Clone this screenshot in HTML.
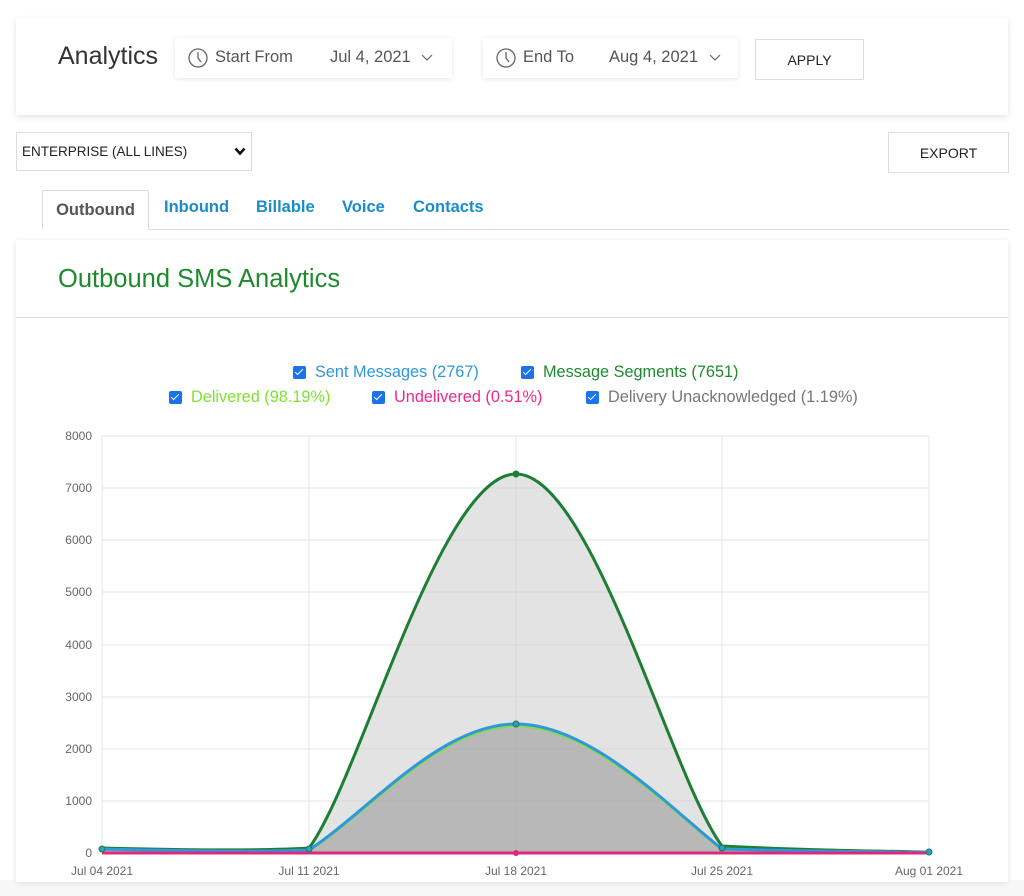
<!DOCTYPE html>
<html><head><meta charset="utf-8"><style>
*{box-sizing:border-box;margin:0;padding:0}
body{width:1024px;height:896px;background:#fff;font-family:"Liberation Sans",sans-serif;position:relative;overflow:hidden;color:#333}
.abs{position:absolute}
.top{left:16px;top:18px;width:992px;height:97px;background:#fff;box-shadow:0 2px 6px rgba(0,0,0,.12)}
.pick{background:#fff;box-shadow:0 1px 5px rgba(0,0,0,.1);height:40px;font-size:16.5px;color:#555}
.pick span,.pick svg{position:absolute}
.btn{border:1px solid #ddd;background:#fff;font-size:14px;color:#222;display:flex;align-items:center;justify-content:center}
.tab{font-size:16.5px;font-weight:bold;color:#1a8ccc;top:198px}
.card{left:16px;top:240px;width:992px;height:642px;background:#fff;box-shadow:0 1px 6px rgba(0,0,0,.1)}
.lg{font-size:16.3px;display:flex;align-items:center}
.cb{width:13px;height:13px;background:#1a73e8;border-radius:2px;margin-right:9px;display:inline-block;position:relative}
.cb:after{content:"";position:absolute;left:4px;top:1px;width:3px;height:7px;border:solid #fff;border-width:0 1.7px 1.7px 0;transform:rotate(45deg)}
</style></head><body>
<div style="position:absolute;left:0;top:880px;width:1024px;height:16px;background:#f7f7f7"></div>
<div class="abs top"></div>
<div class="abs" style="left:58px;top:42px;font-size:25px;color:#333">Analytics</div>
<div class="abs pick" style="left:175px;top:38px;width:277px">
<svg width="22" height="22" style="left:12px;top:9px" viewBox="0 0 22 22"><circle cx="11" cy="11" r="9" fill="none" stroke="#666" stroke-width="1.3"/><path d="M11 5v6l3 4" fill="none" stroke="#666" stroke-width="1.3"/></svg>
<span style="left:40px;top:10px">Start From</span><span style="left:155px;top:10px">Jul 4, 2021</span>
<svg width="12" height="8" style="left:246px;top:16px" viewBox="0 0 12 8"><path d="M1 1l5 5 5-5" fill="none" stroke="#666" stroke-width="1.2"/></svg></div>
<div class="abs pick" style="left:483px;top:38px;width:255px">
<svg width="22" height="22" style="left:12px;top:9px" viewBox="0 0 22 22"><circle cx="11" cy="11" r="9" fill="none" stroke="#666" stroke-width="1.3"/><path d="M11 5v6l3 4" fill="none" stroke="#666" stroke-width="1.3"/></svg>
<span style="left:40px;top:10px">End To</span><span style="left:126px;top:10px">Aug 4, 2021</span>
<svg width="12" height="8" style="left:226px;top:16px" viewBox="0 0 12 8"><path d="M1 1l5 5 5-5" fill="none" stroke="#666" stroke-width="1.2"/></svg></div>
<div class="abs btn" style="left:755px;top:39px;width:109px;height:41px">APPLY</div>
<div class="abs btn" style="left:16px;top:132px;width:236px;height:39px;justify-content:space-between;padding:0 5px 0 5px;font-size:13.5px"><span>ENTERPRISE (ALL LINES)</span><svg width="12" height="9" viewBox="0 0 12 9"><path d="M1.5 1.5l4.5 5 4.5-5" fill="none" stroke="#111" stroke-width="2.6"/></svg></div>
<div class="abs btn" style="left:888px;top:132px;width:121px;height:41px">EXPORT</div>
<div class="abs" style="left:42px;top:229px;width:967px;height:1px;background:#ddd"></div>
<div class="abs" style="left:42px;top:190px;width:107px;height:40px;border:1px solid #ddd;border-bottom:1px solid #fff;background:#fff;font-size:16.5px;font-weight:bold;color:#555;text-align:center;line-height:38px">Outbound</div>
<div class="abs tab" style="left:164px">Inbound</div>
<div class="abs tab" style="left:256px">Billable</div>
<div class="abs tab" style="left:342px">Voice</div>
<div class="abs tab" style="left:413px">Contacts</div>
<div class="abs card"></div>
<div class="abs" style="left:58px;top:265px;font-size:25.5px;color:#1e8a2e">Outbound SMS Analytics</div>
<div class="abs" style="left:16px;top:317px;width:992px;height:1px;background:#ddd"></div>
<div class="abs lg" style="left:293px;top:363px;color:#2f97e0"><span class="cb"></span>Sent Messages (2767)</div>
<div class="abs lg" style="left:521px;top:363px;color:#1e8a2e"><span class="cb"></span>Message Segments (7651)</div>
<div class="abs lg" style="left:169px;top:388px;color:#7ee32f"><span class="cb"></span>Delivered (98.19%)</div>
<div class="abs lg" style="left:372px;top:388px;color:#f0288a"><span class="cb"></span>Undelivered (0.51%)</div>
<div class="abs lg" style="left:586px;top:388px;color:#777"><span class="cb"></span>Delivery Unacknowledged (1.19%)</div>
<svg class="abs" style="left:0;top:0" width="1024" height="896" font-family="Liberation Sans, sans-serif" font-size="12" fill="#666">
<g stroke="#e6e6e6" stroke-width="1">
<line x1="102" y1="436" x2="929" y2="436"/><line x1="102" y1="488" x2="929" y2="488"/><line x1="102" y1="540" x2="929" y2="540"/><line x1="102" y1="592" x2="929" y2="592"/><line x1="102" y1="645" x2="929" y2="645"/><line x1="102" y1="697" x2="929" y2="697"/><line x1="102" y1="749" x2="929" y2="749"/><line x1="102" y1="801" x2="929" y2="801"/>
<line x1="102" y1="436" x2="102" y2="853"/><line x1="309" y1="436" x2="309" y2="853"/><line x1="516" y1="436" x2="516" y2="853"/><line x1="722" y1="436" x2="722" y2="853"/><line x1="929" y1="436" x2="929" y2="853"/>
<line x1="96" y1="853" x2="929" y2="853"/>
</g>
<g text-anchor="end"><text x="92" y="440">8000</text><text x="92" y="492">7000</text><text x="92" y="544">6000</text><text x="92" y="596">5000</text><text x="92" y="649">4000</text><text x="92" y="701">3000</text><text x="92" y="753">2000</text><text x="92" y="805">1000</text><text x="92" y="857">0</text></g>
<g text-anchor="middle"><text x="102" y="875">Jul 04 2021</text><text x="309" y="875">Jul 11 2021</text><text x="516" y="875">Jul 18 2021</text><text x="722" y="875">Jul 25 2021</text><text x="929" y="875">Aug 01 2021</text></g>
<path d="M102,848 C180,850 260,851 309,848 C360,780 440,474 516,474 C592,474 672,780 722,846 C800,850 870,851 929,852 L929,853 L102,853Z" fill="rgba(200,200,200,.5)"/>
<path d="M102,849 C180,851 260,852 309,850 C370,810 440,724 516,724 C592,724 672,810 722,849 C800,851 870,852 929,852 L929,853 L102,853Z" fill="rgba(150,150,150,.55)"/>
<path d="M102,848 C180,850 260,851 309,848 C360,780 440,474 516,474 C592,474 672,780 722,846 C800,850 870,851 929,852" fill="none" stroke="#1e7e34" stroke-width="3"/>
<path d="M102,850 C180,851 260,852 309,851 C370,812 440,726 516,726 C592,726 672,812 722,850 C800,851 870,852 929,852" fill="none" stroke="#7ee32f" stroke-width="2"/>
<path d="M102,849 C180,851 260,852 309,850 C370,810 440,724 516,724 C592,724 672,810 722,849 C800,851 870,852 929,852" fill="none" stroke="#2f97e0" stroke-width="3"/>
<path d="M102,853 L929,853" stroke="#e0287a" stroke-width="3"/>
<g fill="#2f97e0" stroke="#1e7e34"><circle cx="102" cy="849" r="3"/><circle cx="309" cy="849" r="3"/><circle cx="516" cy="474" r="3" fill="#1e7e34"/><circle cx="516" cy="724" r="3"/><circle cx="722" cy="848" r="3"/><circle cx="929" cy="852" r="3"/></g>
<g fill="#e0287a"><circle cx="516" cy="853" r="3"/></g>
</svg>
</body></html>
